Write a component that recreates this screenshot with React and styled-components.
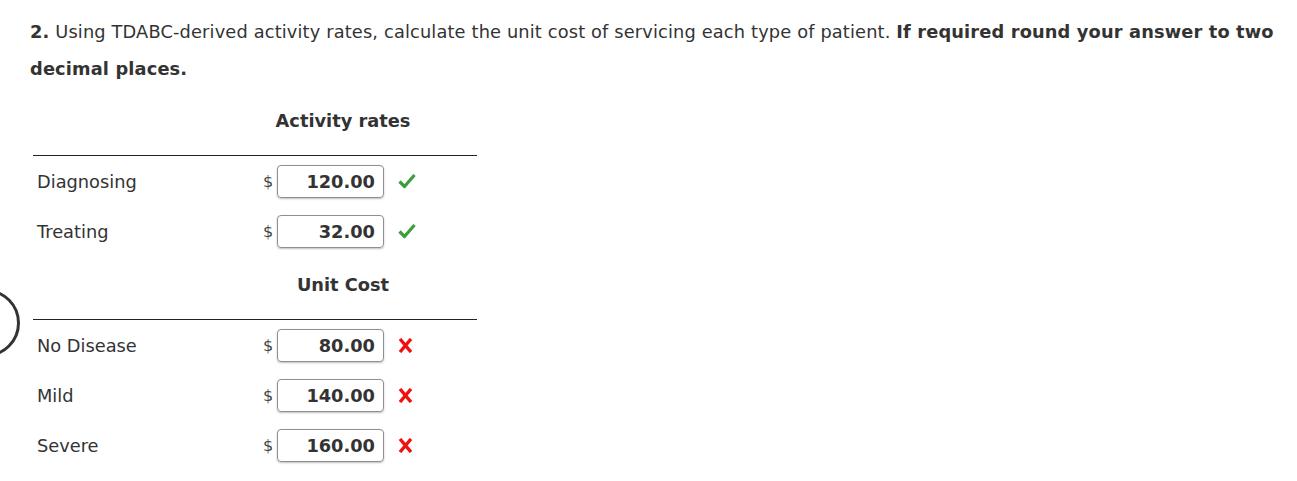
import React from "react";
import styled, { createGlobalStyle } from "styled-components";

const GlobalStyle = createGlobalStyle`
	html, body {
		margin: 0;
		padding: 0;
		background: #fff;
	}
	body {
		font-family: "DejaVu Sans", Verdana, sans-serif;
		font-size: 17.8px;
		color: #333;
	}
`;

const Page = styled.div`
	position: relative;
	width: 1297px;
	height: 481px;
	overflow: hidden;
	padding: 13px 0 0 30px;
	box-sizing: border-box;
`;

const Question = styled.p`
	margin: 0;
	line-height: 37px;
	width: 1260px;
	letter-spacing: 0.15px;
`;

const Sheet = styled.div`
	width: 444px;
	margin: 5px 0 0 3px;
`;

const HeadRow = styled.div`
	height: 64px;
	box-sizing: border-box;
	border-bottom: 1px solid #222;
	display: grid;
	grid-template-columns: 230px 160px;
`;

const HeadCell = styled.div`
	grid-column: 2;
	padding-top: 18px;
	line-height: 22px;
	font-weight: bold;
	text-align: center;
`;

const Row = styled.div`
	height: 50px;
	display: grid;
	grid-template-columns: 230px 14px 107px 1fr;
	align-items: center;
`;

const Label = styled.div`
	padding-left: 4px;
`;

const Dollar = styled.span`
	font-size: 16px;
	color: #444;
	text-align: left;
`;

const Amount = styled.div`
	height: 33px;
	box-sizing: border-box;
	border: 1px solid #8f8f8f;
	border-radius: 4px;
	box-shadow: 0 1px 2px rgba(0, 0, 0, 0.25);
	font-weight: bold;
	text-align: right;
	padding-right: 8px;
	line-height: 31px;
	color: #333;
`;

const Mark = styled.div`
	padding-left: 14px;
	display: flex;
	align-items: center;
`;

const Ring = styled.div`
	position: absolute;
	left: -48px;
	top: 289px;
	width: 62px;
	height: 62px;
	border: 3px solid #333;
	border-radius: 50%;
`;

const Check = () => (
	<svg width="18" height="16" viewBox="0 0 18 16">
		<path d="M1.5 8.5 L6.5 13.5 L16.5 2" fill="none" stroke="#3c9d3c" strokeWidth="3.2" strokeLinejoin="round" />
	</svg>
);

const Cross = () => (
	<svg width="15" height="15" viewBox="0 0 15 15">
		<path d="M2 1 L13 14 M13 1 L2 14" fill="none" stroke="#f01010" strokeWidth="3.4" />
	</svg>
);

const sections = [
	{
		title: "Activity rates",
		rows: [
			{ label: "Diagnosing", value: "120.00", ok: true },
			{ label: "Treating", value: "32.00", ok: true },
		],
	},
	{
		title: "Unit Cost",
		rows: [
			{ label: "No Disease", value: "80.00", ok: false },
			{ label: "Mild", value: "140.00", ok: false },
			{ label: "Severe", value: "160.00", ok: false },
		],
	},
];

export default function App() {
	return (
		<>
			<GlobalStyle />
			<Page>
				<Question>
					<b>2.</b> Using TDABC-derived activity rates, calculate the unit cost of servicing each type of patient. <b>If required round your answer to two decimal places.</b>
				</Question>
				<Sheet>
					{sections.map((section) => (
						<React.Fragment key={section.title}>
							<HeadRow>
								<HeadCell>{section.title}</HeadCell>
							</HeadRow>
							{section.rows.map((row) => (
								<Row key={row.label}>
									<Label>{row.label}</Label>
									<Dollar>$</Dollar>
									<Amount>{row.value}</Amount>
									<Mark>{row.ok ? <Check /> : <Cross />}</Mark>
								</Row>
							))}
						</React.Fragment>
					))}
				</Sheet>
				<Ring />
			</Page>
		</>
	);
}
